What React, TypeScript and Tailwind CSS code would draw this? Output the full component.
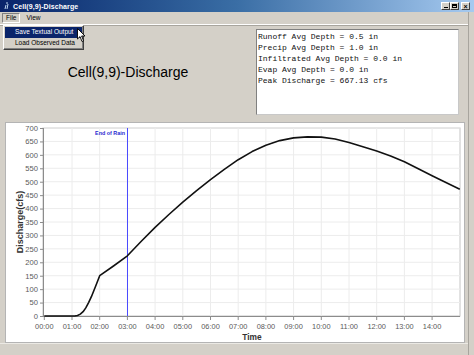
import React from "react";

const X0 = 44.3;
const HX = 27.7;
const Y0 = 316;
const VY = 188 / 700;
const xs = (h: number) => X0 + h * HX;
const ys = (v: number) => Y0 - v * VY;

const data: [number, number][] = [
  [0, 0], [1.1, 0], [1.2, 2], [1.3, 7], [1.4, 16], [1.5, 30], [1.6, 50], [1.7, 72], [1.85, 110], [2.0, 150],
  [2.5, 186], [3.0, 224], [3.5, 278], [4.0, 330], [4.5, 378], [5.0, 424], [5.5, 467], [6.0, 508],
  [6.5, 546], [7.0, 582], [7.5, 612], [8.0, 636], [8.5, 653], [9.0, 663], [9.5, 667], [10.0, 666],
  [10.5, 659], [11.0, 646], [11.5, 630], [12.0, 614], [12.5, 596], [13.0, 574], [13.5, 548],
  [14.0, 522], [14.5, 497], [15.0, 472],
];

const hours = Array.from({ length: 15 }, (_, i) => i);
const vals = Array.from({ length: 15 }, (_, i) => i * 50);
const pad = (n: number) => (n < 10 ? "0" + n : "" + n) + ":00";

function Chart() {
  const pts = data.map(([h, v]) => `${xs(h).toFixed(1)},${ys(v).toFixed(1)}`).join(" ");
  return (
    <svg width={458} height={219} viewBox="6 123 458 219" className="block">
      <rect x={43} y={128} width={417} height={188} fill="#ffffff" stroke="#c4c4c4" strokeWidth={1} />
      {hours.slice(1).map((h) => (
        <line key={"vg" + h} x1={xs(h)} x2={xs(h)} y1={128} y2={316} stroke="#ececec" strokeWidth={1} />
      ))}
      {vals.slice(1).map((v) => (
        <line key={"hg" + v} x1={43} x2={460} y1={ys(v)} y2={ys(v)} stroke="#ececec" strokeWidth={1} />
      ))}
      <line x1={43.5} x2={43.5} y1={128} y2={316} stroke="#8c8c8c" strokeWidth={1} />
      <line x1={43} x2={460} y1={316.5} y2={316.5} stroke="#8c8c8c" strokeWidth={1} />
      {vals.map((v) => (
        <g key={"yt" + v}>
          <line x1={40} x2={43} y1={ys(v) + 0.5} y2={ys(v) + 0.5} stroke="#8c8c8c" strokeWidth={1} />
          <text x={38} y={ys(v) + 2.8} textAnchor="end" fontSize={7.6} fill="#5a5a5a" fontFamily="'Liberation Sans', Arial, sans-serif">
            {v}
          </text>
        </g>
      ))}
      {hours.map((h) => (
        <g key={"xt" + h}>
          <line x1={xs(h)} x2={xs(h)} y1={317} y2={320} stroke="#8c8c8c" strokeWidth={1} />
          <text x={xs(h)} y={328.5} textAnchor="middle" fontSize={7.4} fill="#5a5a5a" fontFamily="'Liberation Sans', Arial, sans-serif">
            {pad(h)}
          </text>
        </g>
      ))}
      <text
        x={0}
        y={0}
        transform="translate(23 222) rotate(-90)"
        textAnchor="middle"
        fontSize={9}
        fill="#333333"
        fontWeight={600}
        fontFamily="'Liberation Sans', Arial, sans-serif"
      >
        Discharge(cfs)
      </text>
      <text x={252} y={340} textAnchor="middle" fontSize={8.4} fontWeight={700} fill="#333333" fontFamily="'Liberation Sans', Arial, sans-serif">
        Time
      </text>
      <rect x={127} y={128} width={1} height={188} fill="#4b4bff" />
      <text x={125} y={134.5} textAnchor="end" fontSize={5.4} fontWeight={700} fill="#2a2ad0" fontFamily="'Liberation Sans', Arial, sans-serif">
        End of Rain
      </text>
      <polyline points={pts} fill="none" stroke="#111111" strokeWidth={1.6} strokeLinejoin="round" />
    </svg>
  );
}

function WinButton({ children }: { children: React.ReactNode }) {
  return (
    <div className="w-[9px] h-[8px] bg-[#d4d0c8] border-t border-l border-t-white border-l-white border-b border-r border-b-[#404040] border-r-[#404040] flex items-center justify-center">
      {children}
    </div>
  );
}

export default function App() {
  return (
    <div
      className="relative w-[474px] h-[355px] bg-[#d4d0c8] overflow-hidden flex flex-col"
      style={{ fontFamily: "'Liberation Sans', Arial, sans-serif" }}
    >
      {/* Title bar */}
      <div className="h-[12px] flex items-center bg-gradient-to-r from-[#0a246a] via-[#3a6ea5] to-[#a6caf0] pl-[3px] pr-[4px]">
        <svg width="8" height="8" viewBox="0 0 8 8" className="mr-[2px]">
          <path d="M2 7 L3 3 M4 7 L5 2 M3 1 L5 1" stroke="#c0d8f0" strokeWidth="1" fill="none" />
        </svg>
        <span className="text-white font-bold text-[7px] leading-none tracking-[0.1px]">Cell(9,9)-Discharge</span>
        <div className="ml-auto flex items-center">
          <WinButton>
            <div className="w-[4px] h-[1px] bg-black mt-[3px]" />
          </WinButton>
          <WinButton>
            <div className="w-[5px] h-[4px] border border-black border-t-2" />
          </WinButton>
          <div className="w-[2px]" />
          <WinButton>
            <span className="text-[7px] leading-none font-bold text-black">×</span>
          </WinButton>
        </div>
      </div>
      <div className="flex-1 flex">
        <div className="w-[468px] flex flex-col">
          {/* Menu bar */}
          <div className="h-[13px] flex items-center gap-[3px] pl-[2px] border-b border-b-white shadow-[0_1px_0_#a8a59e] text-[6.5px] text-black">
            <span className="px-[3px] py-[1px] border border-t-[#808080] border-l-[#808080] border-b-white border-r-white leading-none">File</span>
            <span className="px-[3px] leading-none">View</span>
          </div>
          {/* Top section */}
          <div className="h-[97px] flex items-start pt-[4px]">
            <div className="w-[256px] h-[86px] flex items-center justify-center">
              <span className="text-[14px] text-black leading-none">Cell(9,9)-Discharge</span>
            </div>
            <div
              className="w-[203px] h-[86px] bg-white border border-t-[#808080] border-l-[#808080] border-b-[#c8c8c8] border-r-[#c8c8c8] pl-[1px] pt-[1px] text-[8px] leading-[11px] text-[#111]"
              style={{ fontFamily: "'Liberation Mono', 'Courier New', monospace" }}
            >
              <div className="whitespace-pre">Runoff Avg Depth = 0.5 in</div>
              <div className="whitespace-pre">Precip Avg Depth = 1.0 in</div>
              <div className="whitespace-pre">Infiltrated Avg Depth = 0.0 in</div>
              <div className="whitespace-pre">Evap Avg Depth = 0.0 in</div>
              <div className="whitespace-pre">Peak Discharge = 667.13 cfs</div>
            </div>
          </div>
          {/* Chart panel */}
          <div className="ml-[5px] w-[460px] h-[221px] bg-white border border-[#b4b4b4]">
            <Chart />
          </div>
          <div className="flex-1 border-t border-t-[#ebe9e4]" />
        </div>
        <div className="w-[6px] border-l border-l-[#a8a59e] bg-[#d4d0c8]" />
      </div>

      {/* Dropdown menu overlay */}
      <div className="absolute left-[3px] top-[25px] w-[81px] h-[25px] bg-[#d4d0c8] border border-t-white border-l-white border-b-[#404040] border-r-[#404040] shadow-[inset_-1px_-1px_0_#808080] p-[1px] flex flex-col text-[6.5px]">
        <div className="h-[11px] bg-[#0a246a] text-white flex items-center pl-[10px] leading-none">Save Textual Output</div>
        <div className="h-[11px] text-black flex items-center pl-[10px] leading-none">Load Observed Data</div>
      </div>
      {/* Cursor */}
      <svg className="absolute left-[77px] top-[28px]" width="9" height="15" viewBox="0 0 9 15">
        <path d="M0.5 0.5 L0.5 11 L3 8.6 L5 13.5 L6.6 12.8 L4.6 8 L8 8 Z" fill="#ffffff" stroke="#000000" strokeWidth="0.9" strokeLinejoin="miter" />
      </svg>
    </div>
  );
}
